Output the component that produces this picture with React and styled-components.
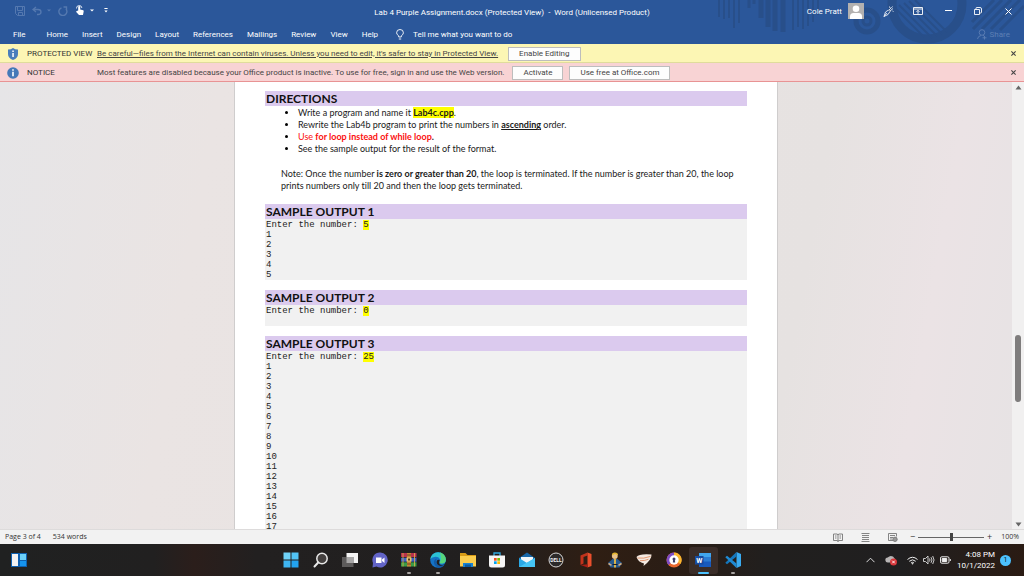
import React from 'react';
import styled, { createGlobalStyle, css } from 'styled-components';

const UI_FONT = 'Roboto, "Open Sans", sans-serif';
const DOC_FONT = 'Lato, "Open Sans", sans-serif';
const MONO_FONT = '"Liberation Mono", monospace';

const GlobalStyle = createGlobalStyle`
  * {
    box-sizing: border-box;
  }

  body {
    margin: 0;
    font-family: ${UI_FONT};
    font-size: 8px;
    line-height: 12px;
    color: #333333;
  }

  button, input {
    font: inherit;
    color: inherit;
    margin: 0;
  }

  svg {
    display: block;
  }
`;

const Screen = styled.div`
  display: flex;
  flex-direction: column;
  height: 100vh;
  overflow: hidden;
`;

/* ---------- header ---------- */

const Header = styled.header`
  position: relative;
  flex: none;
  background: #2b579a;
  color: #ffffff;
`;

const Artwork = styled.svg`
  position: absolute;
  top: 0;
  right: 0;
`;

const TitleBar = styled.div`
  position: relative;
  display: grid;
  grid-template-columns: 1fr auto 1fr;
  align-items: center;
  height: 24px;
`;

const QuickAccess = styled.div`
  display: flex;
  align-items: center;
  padding: 0 0 3px 11px;
`;

const QuickButton = styled.button`
  display: flex;
  justify-content: center;
  width: ${props => props.$narrow ? '8px' : '17px'};
  padding: 0;
  border: 0;
  background: none;
  color: ${props => props.$dim ? '#5579b0' : '#ffffff'};
  margin-right: ${props => props.$after || 0}px;
`;

const DocTitle = styled.h1`
  margin: 0;
  padding-top: 1px;
  font-size: 8px;
  font-weight: 400;
  white-space: pre;
`;

const WindowControls = styled.div`
  display: flex;
  align-items: center;
  justify-content: flex-end;
  padding: 0 1px 2px 0;
`;

const UserName = styled.span`
  padding-top: 2px;
`;

const Avatar = styled.svg`
  margin: 0 9px 0 6px;
`;

const ControlButton = styled.button`
  display: flex;
  justify-content: center;
  width: 30px;
  padding: 0;
  border: 0;
  background: none;
`;

const TabBar = styled.nav`
  position: relative;
  display: flex;
  align-items: center;
  gap: 14px;
  height: 20px;
  padding: 1px 14px 0 13px;
`;

const Tab = styled.button`
  padding: 0;
  border: 0;
  background: none;
  margin-right: ${props => props.$first ? '7px' : '0'};
`;

const TellMe = styled.button`
  display: flex;
  align-items: center;
  gap: 9px;
  padding: 0;
  border: 0;
  background: none;
  margin-left: 4px;
`;

const Share = styled.button`
  display: flex;
  align-items: center;
  gap: 3px;
  margin-left: auto;
  padding: 0;
  border: 0;
  background: none;
  color: #5d7fb4;
`;

/* ---------- message bars ---------- */

const MessageBar = styled.div`
  display: flex;
  flex: none;
  align-items: center;
  height: 19px;
  padding: 1px 8px 0 7px;
  background: ${props => props.$notice ? '#f8d3d4' : '#fcf6b4'};
  border-bottom: 1px solid ${props => props.$notice ? '#e89394' : '#e0dc9c'};
  color: #444444;
`;

const MessageLabel = styled.strong`
  width: 70px;
  margin-left: 8px;
  font-weight: 400;
  color: #333333;
`;

const MessageLink = styled.a`
  margin-right: 10px;
  color: inherit;
`;

const MessageText = styled.span`
  margin-right: 8px;
`;

const MessageButton = styled.button`
  height: 14px;
  padding: 0 10px;
  margin-right: 6px;
  border: 1px solid #bdbdbd;
  background: #fdfdfd;
  line-height: 12px;
`;

const CloseMessage = styled.button`
  display: flex;
  margin-left: auto;
  padding: 0;
  border: 0;
  background: none;
`;

/* ---------- document ---------- */

const Workspace = styled.main`
  display: flex;
  flex: 1;
  min-height: 0;
  background: linear-gradient(100deg, #e6e5e7 0%, #eae4e3 20%, #e6e2e1 76%, #ebe3e5 88%, #e6e3e4 100%);
`;

const Canvas = styled.div`
  flex: 1;
  overflow: hidden;
`;

const Page = styled.article`
  width: 544px;
  max-width: 100%;
  min-height: 100%;
  margin: 0 auto;
  padding: 9px 30px 0;
  border: 0 solid #cfcdcd;
  border-width: 0 1px;
  background: #ffffff;
  color: #1a1a1a;
  font-family: ${DOC_FONT};
  font-size: 9px;
  font-variant-ligatures: none;
`;

const Section = styled.section`
  margin-bottom: 10px;
`;

const Heading = styled.h2`
  margin: 0;
  padding-left: 1px;
  background: #dbcaee;
  color: #111111;
  font-size: 12px;
  line-height: 15px;
`;

const Bullets = styled.ul`
  margin: 1px 0 13px;
  padding-left: 33px;
`;

const Bullet = styled.li`
  &::marker {
    color: #000000;
  }
`;

const Note = styled.p`
  margin: 0;
  padding: 0 0 2px 16px;
`;

const Mark = styled.mark`
  background: #ffff00;
  color: inherit;
`;

const Red = styled.span`
  color: #fb1010;
`;

const Output = styled.pre`
  margin: 0;
  min-height: 21px;
  padding: 1px 0 0 1px;
  background: #f1f1f1;
  color: #222222;
  font-family: ${MONO_FONT};
  font-size: 9px;
  line-height: 10px;
`;

const ScrollBar = styled.div`
  display: flex;
  flex-direction: column;
  align-items: center;
  width: 12px;
  padding: 3px 0 2px;
  background: #f1f0f0;
`;

const Track = styled.div`
  display: flex;
  flex: 1;
  flex-direction: column;
  align-items: center;
`;

const TrackSpace = styled.div`
  flex: ${props => props.$grow};
`;

const Thumb = styled.div`
  flex: 66;
  width: 6px;
  border-radius: 3px;
  background: #7f7d7d;
`;

/* ---------- status bar ---------- */

const StatusBar = styled.footer`
  display: flex;
  flex: none;
  align-items: center;
  gap: 12px;
  height: 15px;
  padding: 0 5px;
  border-top: 1px solid #dddbdb;
  background: #f2f2f2;
  font-family: "Open Sans", sans-serif;
  font-size: 7px;
`;

const ViewModes = styled.div`
  display: flex;
  gap: 18px;
  margin-left: auto;
`;

const ViewButton = styled.button`
  display: flex;
  padding: 0;
  border: 0;
  background: none;
`;

const Zoom = styled.div`
  display: flex;
  align-items: center;
  gap: 3px;
`;

const ZoomButton = styled.button`
  padding: 0;
  border: 0;
  background: none;
  font-size: 9px;
`;

const ZoomSlider = styled.input`
  appearance: none;
  width: 66px;
  height: 9px;
  background: linear-gradient(#666666, #666666) center / 100% 1px no-repeat;

  &::-webkit-slider-thumb {
    appearance: none;
    width: 3px;
    height: 8px;
    background: #444444;
  }
`;

const ZoomValue = styled.span`
  margin-left: 6px;
`;

/* ---------- taskbar ---------- */

const TaskBar = styled.footer`
  display: grid;
  flex: none;
  grid-template-columns: 1fr 46% 1fr;
  align-items: center;
  height: 32px;
  background: linear-gradient(90deg, #202121 0%, #212020 15%, #2b1e1b 19%, #222020 25%, #211f1f 48%, #2f1e13 58%, #2a1d15 66%, #211f1e 75%, #201f20 88%, #2a1b13 100%);
  color: #ffffff;
`;

const Widgets = styled.button`
  justify-self: start;
  margin-left: 11px;
  padding: 0;
  border: 0;
  background: none;
`;

const Apps = styled.div`
  display: flex;
`;

const AppButton = styled.button`
  display: flex;
  flex: 1;
  flex-direction: column;
  align-items: center;
  justify-content: space-between;
  height: 27px;
  padding: 5px 0 0;
  border: 0;
  border-radius: 3px;
  background: ${props => props.$active ? '#3a2d28' : 'none'};

  &::after {
    content: '';
    height: 2px;
    border-radius: 1px;
    ${props => props.$running && css`
      width: 4px;
      background: #a9a5a3;
    `}
    ${props => props.$active && css`
      width: 11px;
      background: #4cc2ff;
    `}
  }
`;

const Tray = styled.div`
  display: flex;
  align-items: center;
  justify-content: flex-end;
  gap: 5px;
  padding-right: 13px;
`;

const TrayApps = styled.div`
  display: flex;
  align-items: center;
  gap: 10px;
  margin-right: 5px;
`;

const Clock = styled.time`
  margin-left: 1px;
  font-size: 8px;
  line-height: 11px;
  text-align: right;
`;

const Count = styled.span`
  width: 11px;
  border-radius: 50%;
  background: #4cc2ff;
  color: #10202b;
  font-size: 7px;
  line-height: 11px;
  text-align: center;
`;

/* ---------- drawings ---------- */

const HeaderArt = () => (
  <Artwork width="344" height="44" viewBox="0 0 344 44" fill="none" stroke="#284f8a" aria-hidden="true">
    <g strokeWidth="2">
      <path d="M39 0v17M44 0v19M49 0v18M54 0v28M59 0v23" />
      <path d="M113 0v30M118 0v27M123 0v29M128 0v26M133 0v22M138 0v15" />
    </g>
    <path d="M69 0v8M74 0v4" strokeWidth="3" />
    <path d="M81 0v18M88 0v27M95 0v31M103 0v32" strokeWidth="5" />
    <circle cx="187" cy="21" r="11" strokeWidth="5" />
    <circle cx="187" cy="21" r="4" strokeWidth="3" />
    <circle cx="247" cy="4" r="35" strokeWidth="9" />
    <path d="M215 8l29 29M219 5l33 33M224 3l33 33M229 1l33 33M235 0l32 32" strokeWidth="2" />
    <path d="M292 22l22-22M293 29l29-29M302 29l29-29M311 29l29-29M320 30l24-24" strokeWidth="3" />
  </Artwork>
);

const SaveIcon = () => (
  <svg width="10" height="10" viewBox="0 0 10 10" fill="none" stroke="currentColor">
    <path d="M.5.5h9v9h-7l-2-2zM2.500 .5v4h5v-4M3.500 9.500v-3h4v3" />
  </svg>
);

const UndoIcon = () => (
  <svg width="10" height="10" viewBox="0 0 10 10" fill="none" stroke="currentColor" strokeWidth="1.300">
    <path d="M4 1L1 3.500 4 6M1 3.500h5a3 2.500 0 0 1 0 5H5" />
  </svg>
);

const RedoIcon = () => (
  <svg width="10" height="10" viewBox="0 0 10 10" fill="none" stroke="currentColor" strokeWidth="1.400">
    <path d="M3.500 1.800A4 4 0 1 0 8 3M5.500 1h3v3" />
  </svg>
);

const TouchIcon = () => (
  <svg width="10" height="11" viewBox="0 0 10 11" fill="currentColor">
    <path d="M3.200 5.500V2a1 1 0 0 1 2 0v2.500l3 .8q.7.300.500 1L8 10H4L1 6.800l.8-.8z" />
    <path d="M1.500 3.500a2.700 2.700 0 1 1 5.400-.5" fill="none" stroke="currentColor" strokeWidth=".8" />
  </svg>
);

const CaretIcon = () => (
  <svg width="4" height="3" viewBox="0 0 4 3" fill="currentColor"><path d="M0 .5h4L2 2.500z" /></svg>
);

const MoreIcon = () => (
  <svg width="4" height="5" viewBox="0 0 5 6" fill="currentColor"><path d="M.5 0h4v1h-4zM.5 3h4L2.500 5.500z" /></svg>
);

const AvatarIcon = () => (
  <Avatar width="16" height="16" viewBox="0 0 16 16">
    <path d="M0 0h16v16H0z" fill="#b3b1b0" />
    <circle cx="8" cy="5.800" r="3.300" fill="#ffffff" />
    <path d="M2 16v-2.500Q2 10 5.500 10h5Q14 10 14 13.500V16z" fill="#ffffff" />
  </Avatar>
);

const PenIcon = () => (
  <svg width="11" height="11" viewBox="0 0 11 11" fill="none" stroke="currentColor" strokeWidth=".8">
    <path d="M1 10.500l1.500-4.500 3-2 1.500 1.500-2 3zM1 10.500l3-3.500M6 4l2.500-2.500M7 5l3-2.500M6.500.5L7 2M9.500 5l1 .5M9.500.5l-.7 1" />
  </svg>
);

const RibbonIcon = () => (
  <svg width="10" height="8" viewBox="0 0 10 8" fill="none" stroke="currentColor" strokeWidth=".9">
    <path d="M.5.5h9v7h-9zM.5 2h9M5 6.800V3.500M3.500 4.800L5 3.300l1.500 1.500" />
  </svg>
);

const MinimizeIcon = () => (
  <svg width="7" height="7" viewBox="0 0 7 7" stroke="currentColor"><path d="M0 2.500h7" /></svg>
);

const RestoreIcon = () => (
  <svg width="8" height="8" viewBox="0 0 8 8" fill="none" stroke="currentColor" strokeWidth=".9">
    <path d="M.5 2.500h5v5h-5zM2 2.500V1.200Q2 .5 2.800.5H6Q7.500.5 7.500 2v3.200q0 .8-.8.8H5.500" />
  </svg>
);

const CloseIcon = ({ size = 7, width = 1 }) => (
  <svg width={size} height={size} viewBox="0 0 7 7" stroke="currentColor" strokeWidth={width}>
    <path d="M.5.5l6 6M6.500.5l-6 6" />
  </svg>
);

const BulbIcon = () => (
  <svg width="8" height="11" viewBox="0 0 8 11" fill="none" stroke="currentColor" strokeWidth=".9">
    <path d="M2.700 8V6.800Q.6 5.500.6 3.800a3.400 3.300 0 0 1 6.800 0q0 1.700-2.100 3V8zM2.800 10h2.400" />
  </svg>
);

const ShareIcon = () => (
  <svg width="10" height="11" viewBox="0 0 10 11" fill="none" stroke="currentColor" strokeWidth=".9">
    <circle cx="5" cy="3.500" r="2.800" />
    <path d="M.5 10Q1 7 4 6.500M6 6.300l1.500 1M7.500 7v3.500M5.500 8.800h4" />
  </svg>
);

const ShieldIcon = () => (
  <svg width="12" height="12" viewBox="0 0 12 12">
    <path d="M6 0q2 1.500 5 1.500V6q0 4-5 6Q1 10 1 6V1.500Q4 1.500 6 0z" fill="#4a7ebb" />
    <path d="M5.300 2.500h1.500V4H5.300zM5.300 5h1.500v4H5.300z" fill="#ffffff" />
  </svg>
);

const InfoIcon = () => (
  <svg width="12" height="12" viewBox="0 0 12 12">
    <circle cx="6" cy="6" r="5.800" fill="#4579b8" />
    <path d="M5.200 2.200h1.600v1.500H5.200zM5.200 4.800h1.600v4.400H5.200z" fill="#ffffff" />
  </svg>
);

const ArrowIcon = ({ down }) => (
  <svg width="7" height="5" viewBox="0 0 7 5" fill="#666666">
    <path d={down ? 'M.5.5h6L3.500 4.500z' : 'M.5 4.500h6L3.500.5z'} />
  </svg>
);

const ReadIcon = () => (
  <svg width="10" height="9" viewBox="0 0 10 9" fill="none" stroke="#777777" strokeWidth=".9">
    <path d="M5 1v8M.5 1h3.500l1 .7 1-.7h3.500v6.500H6l-1 .7-1-.7H.5zM2 3h1.500M2 5h1.500M6.500 3H8M6.500 5H8" />
  </svg>
);

const PrintIcon = () => (
  <svg width="9" height="9" viewBox="0 0 9 9" fill="none" stroke="#777777" strokeWidth=".9">
    <path d="M.5 .5h8M1 2.500h7M1 4.500h7M1 6.500h7M.5 8.500h8" />
  </svg>
);

const WebIcon = () => (
  <svg width="10" height="9" viewBox="0 0 10 9" fill="none" stroke="#777777" strokeWidth=".9">
    <path d="M5 7.500H.5v-7h8v3M2 2.500h5M2 4.500h3M2 6h2" />
    <circle cx="7" cy="6.300" r="2.200" fill="#999999" />
  </svg>
);

const WidgetsIcon = () => (
  <svg width="16" height="14" viewBox="0 0 16 14">
    <path d="M0 0h16v14H0z" fill="#0d5fae" />
    <path d="M1 1h6v12H1z" fill="#f1f1f1" />
    <path d="M9 1h6v6H9z" fill="#6bd0f8" />
    <path d="M9 8h6v5H9z" fill="#1593ed" />
  </svg>
);

const Glyph = ({ children }) => (
  <svg width="16" height="16" viewBox="0 0 16 16" aria-hidden="true">{children}</svg>
);

const StartGlyph = () => (
  <Glyph>
    <path d="M.5.5h7v7h-7z" fill="#70d3f8" />
    <path d="M8.500.5h7v7h-7z" fill="#52c3f5" />
    <path d="M.5 8.500h7v7h-7z" fill="#3fb6f3" />
    <path d="M8.500 8.500h7v7h-7z" fill="#23a3ef" />
  </Glyph>
);

const SearchGlyph = () => (
  <Glyph>
    <circle cx="9" cy="6.500" r="5.200" fill="#44403f" stroke="#e8e8e8" strokeWidth="1.500" />
    <path d="M5.200 10.500L1.500 14.500" stroke="#e8e8e8" strokeWidth="2" strokeLinecap="round" />
  </Glyph>
);

const TaskViewGlyph = () => (
  <Glyph>
    <path d="M4.500 1h11.500v10H4.500z" fill="#f4f4f4" />
    <path d="M0 5h11.500v10H0z" fill="#5d5b5b" />
    <path d="M4.500 5h7v6h-7z" fill="#a7a6a6" />
  </Glyph>
);

const ChatGlyph = () => (
  <Glyph>
    <path d="M8 .5a7.500 7.500 0 1 1-3.500 14L.5 15.500 1 11A7.500 7.500 0 0 1 8 .5z" fill="#6264c7" />
    <path d="M4 5.500h5.500v5.500H4z" fill="#ffffff" />
    <path d="M10 7.500l2.500-2v5.500L10 9z" fill="#ffffff" />
  </Glyph>
);

const RarGlyph = () => (
  <Glyph>
    <path d="M0 1h15.500v4.500H0z" fill="#b8324e" />
    <path d="M0 5.500h15.500V10H0z" fill="#3d62c4" />
    <path d="M0 10h15.500v4.500H0z" fill="#3b9b47" />
    <path d="M0 5.500h15.500M0 10h15.500" stroke="#222222" strokeWidth=".7" />
    <path d="M2 1v13.500M13.500 1v13.500" stroke="#e1b14b" strokeWidth=".8" />
    <path d="M6 1h4v13.500H6z" fill="#c78338" />
    <path d="M5.500 5.500h5v4h-5z" fill="#e8c46d" />
    <path d="M7 6.500h2v2H7z" fill="#56391d" />
    <path d="M6 3h4M6 12h4" stroke="#6e4522" />
  </Glyph>
);

const EdgeGlyph = () => (
  <Glyph>
    <circle cx="8" cy="8" r="7.800" fill="#1573c6" />
    <path d="M.3 7A7.800 7.800 0 0 1 15.800 7.500q0 4-4 4-2.500 0-2.200-1.500 1-1.500.3-3Q8.500 4.500 5.500 4.700 2 5 .3 7z" fill="#2cc2d4" />
    <path d="M10 .5a7.500 7.500 0 0 1 5.800 7q0 4-4 4-2.500 0-2.200-1.500Q12 8 10 .5z" fill="#58d67c" />
    <path d="M9.700 8Q7 7 6.500 10q0 3.500 4 4.300 2.500 0 4-1.800-3.500 1-5.200-.6Q8.500 11 9.700 8z" fill="#212020" />
    <path d="M6.600 6.500Q3.500 7.500 4 11q.8 3.800 5 4.700 3.500 0 5.500-3-5 2.500-7.500-.5-1.500-2.500-.4-5.700z" fill="#135ba5" />
  </Glyph>
);

const FolderGlyph = () => (
  <Glyph>
    <path d="M0 1h5.500l2 2H16v4H0z" fill="#d89b16" />
    <path d="M0 4h16v10.500H0z" fill="#fbcd4e" />
    <path d="M3 11h10v4H3z" fill="#1b83d2" />
    <path d="M5 12.500h6V15H5z" fill="#0c5a9e" />
  </Glyph>
);

const StoreGlyph = () => (
  <Glyph>
    <path d="M5 4V1h6v3" fill="none" stroke="#31a9e0" strokeWidth="1.300" />
    <path d="M0 3.500h16V13q0 2.500-2.500 2.500h-11Q0 15.500 0 13z" fill="#f6f6f6" />
    <path d="M5 6h2.700v2.700H5z" fill="#f25022" />
    <path d="M8.300 6H11v2.700H8.300z" fill="#7fba00" />
    <path d="M5 9.300h2.700V12H5z" fill="#00a4ef" />
    <path d="M8.300 9.300H11V12H8.300z" fill="#ffb900" />
  </Glyph>
);

const MailGlyph = () => (
  <Glyph>
    <path d="M0 6l8-5.500L16 6v3H0z" fill="#1767a8" />
    <path d="M2 5h12v6H2z" fill="#f1f6f9" />
    <path d="M0 6l8 5 8-5v9H0z" fill="#2aa8e6" />
    <path d="M0 15L16 6v9z" fill="#45c4f5" />
  </Glyph>
);

const DellGlyph = () => (
  <Glyph>
    <circle cx="8" cy="8" r="7" fill="#2c2a2a" stroke="#d8d8d8" />
    <text x="8" y="10" fill="#f0f0f0" fontSize="5" fontWeight="700" textAnchor="middle">DELL</text>
  </Glyph>
);

const OfficeGlyph = () => (
  <Glyph>
    <path d="M2.500 3.500L9.500.5v3L5.500 5v6.500l-3 1.500z" fill="#c1331c" />
    <path d="M9.500.5l4 1.500v12l-4 1.500z" fill="#ea4f2c" />
    <path d="M2.500 13l7-.7v3.200z" fill="#a81e15" />
  </Glyph>
);

const MascotGlyph = () => (
  <Glyph>
    <circle cx="7.800" cy="4" r="2.900" fill="#e9c28b" />
    <path d="M4.800 3.500Q5 .3 8 .5t3 2.700L8 2z" fill="#e3b52f" />
    <path d="M5.500 7h5l4.500 4-2.500 4.500h-9L1 11z" fill="#265a91" />
    <path d="M7 7h2v8.500H7z" fill="#d6b14b" />
    <path d="M1.500 11.500l3 1.800M14.500 11.500l-3 1.800" stroke="#d7ae82" strokeWidth="1.500" />
    <path d="M5.500 12.500h5" stroke="#151d29" />
  </Glyph>
);

const SwirlGlyph = () => (
  <Glyph>
    <path d="M.5 5Q3 1.500 15.500 2.500q.5 5-8 11.500l.5-2.500Q2 10 .5 5z" fill="#f3e9e1" />
    <path d="M1.500 6q6 1 13-1.600M4 8.700q5 .2 8.500-1.500" fill="none" stroke="#dd8253" strokeWidth=".8" />
  </Glyph>
);

const LockGlyph = () => (
  <Glyph>
    <circle cx="8" cy="8" r="7.500" fill="#e9682d" />
    <path d="M8 .5A7.500 7.500 0 0 1 14.500 12L8 8z" fill="#fbb72e" />
    <path d="M8 .5a7.500 7.500 0 0 0-7.500 7.500q0 3 2 5L8 8z" fill="#7d4cc4" />
    <circle cx="8" cy="8" r="4.700" fill="#ffffff" />
    <circle cx="8" cy="7" r="1.500" fill="#3f3e68" />
    <path d="M7.300 7h1.400l.5 3.500H6.800z" fill="#3f3e68" />
  </Glyph>
);

const WordGlyph = () => (
  <Glyph>
    <path d="M4 1h12v4.700H4z" fill="#41a5ee" />
    <path d="M4 5h12v5H4z" fill="#2b7cd3" />
    <path d="M4 9.500h12V15H4z" fill="#185abd" />
    <path d="M0 4h8.500v8.500H0z" fill="#174ba0" />
    <text x="4.200" y="10.700" fill="#ffffff" fontSize="7" fontWeight="700" textAnchor="middle">W</text>
  </Glyph>
);

const CodeGlyph = () => (
  <Glyph>
    <path d="M11.500 0L16 2v12l-4.500 2z" fill="#3aabf0" />
    <path d="M11.500 0v4.500L2 12.300.3 10.800z" fill="#1477bd" />
    <path d="M11.500 16v-4.500L2 3.700.3 5.200z" fill="#1f8ad2" />
  </Glyph>
);

const UpIcon = () => (
  <svg width="9" height="6" viewBox="0 0 9 6" fill="none" stroke="#dddddd"><path d="M.5 5.200l4-4 4 4" /></svg>
);

const CloudIcon = () => (
  <svg width="12" height="11" viewBox="0 0 12 11">
    <path d="M3 7.500a2.500 2.500 0 0 1-.3-5Q5 0 8 1.500L10 4 6 7.500z" fill="#b8b5b5" />
    <circle cx="8.500" cy="7" r="3.500" fill="#d8363a" />
    <path d="M7.200 5.700l2.600 2.600M9.800 5.700L7.200 8.300" stroke="#ffffff" strokeWidth=".9" />
  </svg>
);

const WifiIcon = () => (
  <svg width="11" height="9" viewBox="0 0 11 9" fill="none" stroke="#eeeeee">
    <path d="M.5 3.500q5-4.500 10 0M2.300 5.300q3.200-3 6.400 0M4 7q1.500-1.400 3 0" />
    <circle cx="5.500" cy="7.800" r=".7" fill="#eeeeee" stroke="none" />
  </svg>
);

const VolumeIcon = () => (
  <svg width="12" height="10" viewBox="0 0 12 10" fill="none" stroke="#dddddd" strokeWidth=".9">
    <path d="M.5 3.500h2L5 1v8L2.500 6.500h-2zM6.500 3.500q1 1.500 0 3M8 2.200q2 2.800 0 5.600M9.700 1q2.700 4 0 8" />
  </svg>
);

const BatteryIcon = () => (
  <svg width="11" height="8" viewBox="0 0 11 8" fill="none" stroke="#eeeeee">
    <rect x=".5" y=".8" width="8.500" height="6.400" rx="1.300" />
    <path d="M2.200 2.500h4.500v3H2.200z" fill="#eeeeee" />
    <path d="M10.300 3v2" />
  </svg>
);

const tabs = ['Home', 'Insert', 'Design', 'Layout', 'References', 'Mailings', 'Review', 'View', 'Help'];

const apps = [
  { name: 'Start', icon: StartGlyph },
  { name: 'Search', icon: SearchGlyph },
  { name: 'Task View', icon: TaskViewGlyph },
  { name: 'Chat', icon: ChatGlyph },
  { name: 'WinRAR', icon: RarGlyph, running: true },
  { name: 'Edge', icon: EdgeGlyph, running: true },
  { name: 'File Explorer', icon: FolderGlyph },
  { name: 'Store', icon: StoreGlyph },
  { name: 'Mail', icon: MailGlyph },
  { name: 'Dell', icon: DellGlyph },
  { name: 'Office', icon: OfficeGlyph },
  { name: 'Game', icon: MascotGlyph },
  { name: 'Swirl', icon: SwirlGlyph },
  { name: 'Private browser', icon: LockGlyph },
  { name: 'Word', icon: WordGlyph, active: true },
  { name: 'Code', icon: CodeGlyph, running: true },
];

const samples = [
  { input: '5', count: 5 },
  { input: '0', count: 0 },
  { input: '25', count: 17 },
];

const Sample = ({ index, input, count }) => (
  <Section>
    <Heading>SAMPLE OUTPUT {index}</Heading>
    <Output>
      Enter the number: <Mark>{input}</Mark>
      {Array.from({ length: count }, (_, i) => `\n${i + 1}`).join('')}
    </Output>
  </Section>
);

const App = () => (
  <Screen>
    <GlobalStyle />
    <Header>
      <HeaderArt />
      <TitleBar>
        <QuickAccess>
          <QuickButton $dim aria-label="Save"><SaveIcon /></QuickButton>
          <QuickButton $dim aria-label="Undo"><UndoIcon /></QuickButton>
          <QuickButton $dim $narrow $after={1} aria-label="Undo list"><CaretIcon /></QuickButton>
          <QuickButton $dim aria-label="Redo"><RedoIcon /></QuickButton>
          <QuickButton aria-label="Touch mode"><TouchIcon /></QuickButton>
          <QuickButton $narrow $after={1} aria-label="Touch mode list"><CaretIcon /></QuickButton>
          <QuickButton aria-label="Customize toolbar"><MoreIcon /></QuickButton>
        </QuickAccess>
        <DocTitle>Lab 4 Purple Assignment.docx (Protected View)  -  Word (Unlicensed Product)</DocTitle>
        <WindowControls>
          <UserName>Cole Pratt</UserName>
          <AvatarIcon />
          <ControlButton aria-label="Coming soon"><PenIcon /></ControlButton>
          <ControlButton aria-label="Ribbon display"><RibbonIcon /></ControlButton>
          <ControlButton aria-label="Minimize"><MinimizeIcon /></ControlButton>
          <ControlButton aria-label="Restore"><RestoreIcon /></ControlButton>
          <ControlButton aria-label="Close"><CloseIcon /></ControlButton>
        </WindowControls>
      </TitleBar>
      <TabBar>
        <Tab $first>File</Tab>
        {tabs.map(tab => <Tab key={tab}>{tab}</Tab>)}
        <TellMe><BulbIcon />Tell me what you want to do</TellMe>
        <Share><ShareIcon />Share</Share>
      </TabBar>
    </Header>

    <MessageBar>
      <ShieldIcon />
      <MessageLabel>PROTECTED VIEW</MessageLabel>
      <MessageLink href="#protected-view">Be careful—files from the Internet can contain viruses. Unless you need to edit, it's safer to stay in Protected View.</MessageLink>
      <MessageButton>Enable Editing</MessageButton>
      <CloseMessage aria-label="Close message"><CloseIcon size={5} width={1.5} /></CloseMessage>
    </MessageBar>
    <MessageBar $notice>
      <InfoIcon />
      <MessageLabel>NOTICE</MessageLabel>
      <MessageText>Most features are disabled because your Office product is inactive. To use for free, sign in and use the Web version.</MessageText>
      <MessageButton>Activate</MessageButton>
      <MessageButton>Use free at Office.com</MessageButton>
      <CloseMessage aria-label="Close notice"><CloseIcon size={5} width={1.5} /></CloseMessage>
    </MessageBar>

    <Workspace>
      <Canvas>
        <Page>
          <Section>
            <Heading>DIRECTIONS</Heading>
            <Bullets>
              <Bullet>Write a program and name it <Mark><b>Lab4c.cpp</b></Mark>.</Bullet>
              <Bullet>Rewrite the Lab4b program to print the numbers in <b><u>ascending</u></b> order.</Bullet>
              <Bullet><Red>Use <b>for loop instead of while loop</b></Red><b>.</b></Bullet>
              <Bullet>See the sample output for the result of the format.</Bullet>
            </Bullets>
            <Note>
              Note: Once the number <b>is zero or greater than 20</b>, the loop is terminated. If the number is greater than 20, the loop prints numbers only till 20 and then the loop gets terminated.
            </Note>
          </Section>
          {samples.map((sample, i) => <Sample key={sample.input} index={i + 1} {...sample} />)}
        </Page>
      </Canvas>
      <ScrollBar>
        <ArrowIcon />
        <Track>
          <TrackSpace $grow={242} />
          <Thumb />
          <TrackSpace $grow={119} />
        </Track>
        <ArrowIcon down />
      </ScrollBar>
    </Workspace>

    <StatusBar>
      <span>Page 3 of 4</span>
      <span>534 words</span>
      <ViewModes>
        <ViewButton aria-label="Read mode"><ReadIcon /></ViewButton>
        <ViewButton aria-label="Print layout"><PrintIcon /></ViewButton>
        <ViewButton aria-label="Web layout"><WebIcon /></ViewButton>
      </ViewModes>
      <Zoom>
        <ZoomButton>−</ZoomButton>
        <ZoomSlider type="range" min="0" max="200" defaultValue="100" aria-label="Zoom" />
        <ZoomButton>+</ZoomButton>
        <ZoomValue>100%</ZoomValue>
      </Zoom>
    </StatusBar>

    <TaskBar>
      <Widgets aria-label="Widgets"><WidgetsIcon /></Widgets>
      <Apps>
        {apps.map(({ name, icon: Icon, running, active }) => (
          <AppButton key={name} aria-label={name} $running={running} $active={active}><Icon /></AppButton>
        ))}
      </Apps>
      <Tray>
        <TrayApps>
          <UpIcon />
          <CloudIcon />
        </TrayApps>
        <WifiIcon />
        <VolumeIcon />
        <BatteryIcon />
        <Clock>4:08 PM<br />10/1/2022</Clock>
        <Count>1</Count>
      </Tray>
    </TaskBar>
  </Screen>
);

export default App;
